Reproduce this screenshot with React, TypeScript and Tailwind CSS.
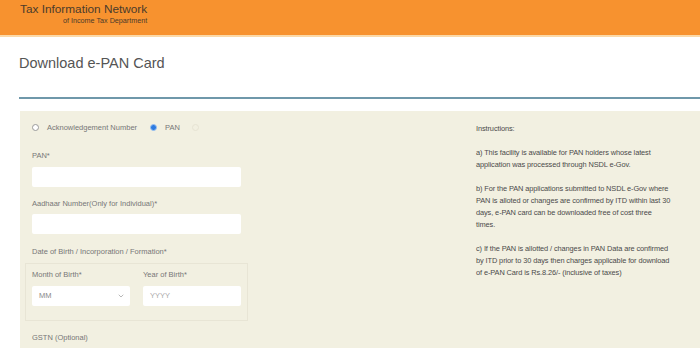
import { ChevronDown } from "lucide-react";

const font = { fontFamily: '"Liberation Sans", Arial, sans-serif' };

function Label({ children, className = "" }: { children: React.ReactNode; className?: string }) {
  return <div className={`text-[7.5px] leading-[10px] text-[#777] ${className}`}>{children}</div>;
}

function TextBox({ placeholder, className = "" }: { placeholder?: string; className?: string }) {
  return (
    <div className={`h-[20px] bg-white rounded-[2px] flex items-center px-[7px] text-[7.5px] text-[#aaa] ${className}`}>
      {placeholder}
    </div>
  );
}

export default function App() {
  return (
    <div className="w-[700px] h-[348px] overflow-hidden bg-white" style={font}>
      {/* Header */}
      <div className="h-[37px] bg-[#f7922f] pl-[20px] pt-[2px] border-b-2 border-[#fbd9a8] flex items-start">
        <div className="flex flex-col items-end">
          <div className="text-[11.8px] leading-[14px] text-[#4b3b2b]">Tax Information Network</div>
          <div className="text-[7.2px] leading-[9px] text-[#4b3b2b]">of Income Tax Department</div>
        </div>
      </div>

      {/* Title */}
      <div className="h-[60px] pl-[19px] flex items-center">
        <h1 className="text-[14.5px] text-[#555] pb-[6px]">Download e-PAN Card</h1>
      </div>
      <div className="ml-[19px] h-[1.5px] bg-[#6f98aa]" />

      {/* Panel */}
      <div className="ml-[20px] mt-[12px] bg-[#f2f0e1] h-[260px] flex">
        <div className="w-[232px] pl-[12px] pt-[12px]">
          {/* radios */}
          <div className="flex items-center h-[10px] text-[7.5px] text-[#777]">
            <span className="w-[7px] h-[7px] rounded-full border border-[#999] bg-white" />
            <span className="ml-[8px]">Acknowledgement Number</span>
            <span className="ml-[13px] w-[7px] h-[7px] rounded-full bg-[#2e7be0] border border-[#9cc2f0]" />
            <span className="ml-[8px]">PAN</span>
            <span className="ml-[12px] w-[7px] h-[7px] rounded-full border border-[#e6e3d3]" />
          </div>

          <Label className="mt-[18px]">PAN*</Label>
          <TextBox className="mt-[6px] w-[209px]" />

          <Label className="mt-[12px]">Aadhaar Number(Only for Individual)*</Label>
          <TextBox className="mt-[5px] w-[209px]" />

          <Label className="mt-[13px]">Date of Birth / Incorporation / Formation*</Label>
          <div className="mt-[6px] -ml-[7px] w-[223px] h-[58px] border border-[#e8e5d5] pl-[6px] pt-[6px]">
            <div className="flex gap-[13px]">
              <div className="w-[98px]">
                <Label>Month of Birth*</Label>
                <div className="mt-[6px] h-[20px] bg-white rounded-[2px] flex items-center justify-between pl-[7px] pr-[5px] text-[7.5px] text-[#888]">
                  <span>MM</span>
                  <ChevronDown size={8} strokeWidth={2.5} className="text-[#aaa]" />
                </div>
              </div>
              <div className="w-[98px]">
                <Label>Year of Birth*</Label>
                <TextBox placeholder="YYYY" className="mt-[6px]" />
              </div>
            </div>
          </div>

          <Label className="mt-[12px]">GSTN (Optional)</Label>
          <TextBox className="mt-[5px] w-[209px]" />
        </div>

        {/* Instructions */}
        <div className="ml-[224px] w-[198px] pt-[12px] text-[7.4px] leading-[12px] text-[#4a4a4a] tracking-[-0.1px]">
          <p>Instructions:</p>
          <p className="mt-[12px]">
            a) This facility is available for PAN holders whose latest application was processed through NSDL e-Gov.
          </p>
          <p className="mt-[12px]">
            b) For the PAN applications submitted to NSDL e-Gov where PAN is alloted or changes are confirmed by ITD within last 30
            days, e-PAN card can be downloaded free of cost three
            <br />
            times.
          </p>
          <p className="mt-[12px]">
            c) If the PAN is allotted / changes in PAN Data are confirmed by ITD prior to 30 days then charges applicable for download
            of e-PAN Card is Rs.8.26/- (inclusive of taxes)
          </p>
        </div>
      </div>
    </div>
  );
}
